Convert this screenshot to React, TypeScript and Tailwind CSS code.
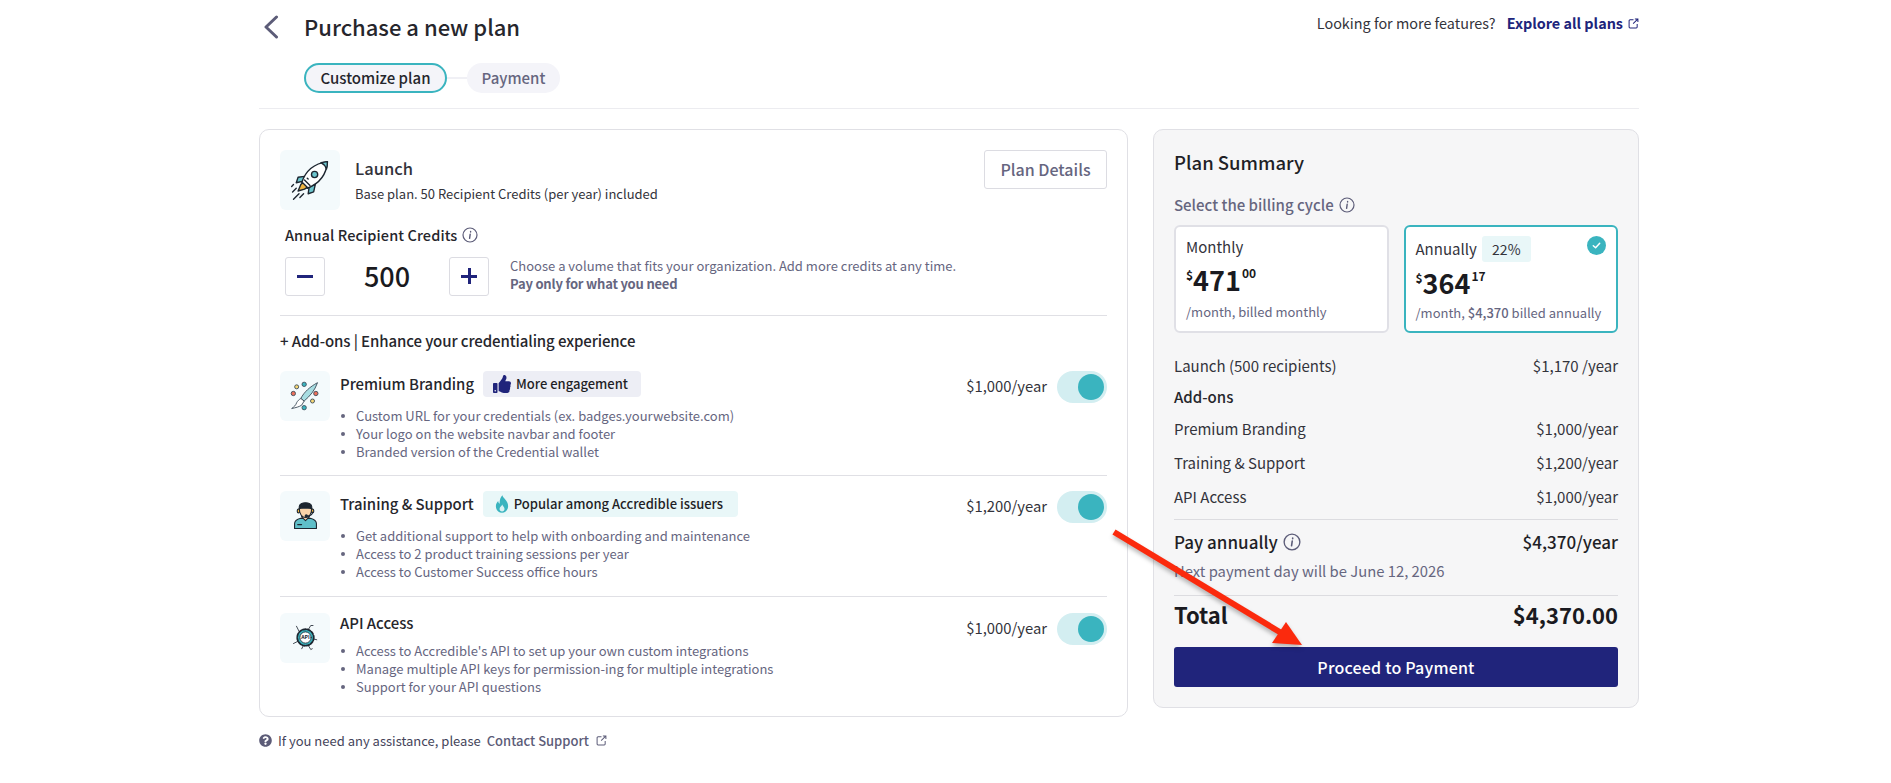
import { FaQuestionCircle, FaThumbsUp } from "react-icons/fa";

const sans = { fontFamily: '"Noto Sans CJK SC", "Noto Sans", sans-serif' };

function InfoIcon({ className }: { className?: string }) {
  return (
    <svg viewBox="0 0 16 16" fill="none" stroke="currentColor" className={className}>
      <circle cx="8" cy="8" r="7" strokeWidth="1.2" />
      <path d="M8.6 4.4v.6M8.2 7.2l-.6 4.2" strokeWidth="1.4" strokeLinecap="round" />
    </svg>
  );
}

function ExternalIcon({ className }: { className?: string }) {
  return (
    <svg viewBox="0 0 12 12" fill="none" stroke="currentColor" strokeWidth="1.1" className={className}>
      <path d="M6 2H2.2a1 1 0 0 0-1 1v6.8a1 1 0 0 0 1 1H9a1 1 0 0 0 1-1V6.5" />
      <path d="M7.5 1h3.3v3.3M10.6 1.2 5.6 6.2" />
    </svg>
  );
}

function Flame() {
  return (
    <svg viewBox="0 0 16 20" className="w-[14px] h-[18px]">
      <path d="M8.5 0c.6 3.6 6.5 6 6.5 12.2C15 16.5 11.9 20 8 20s-7-3.300-7-7.300c0-2.700 1.300-4.700 2.700-6 .1 1.500.6 2.600 1.700 3.100C5 6.200 6 2.500 8.500 0z" fill="#3ab4bf" />
      <path d="M8.300 10.500c-.3 1.600-3.100 2.700-3.100 5.100 0 1.700 1.300 2.900 2.900 2.900s2.800-1.200 2.800-2.900c0-1.800-1.900-3.200-2.600-5.100z" fill="#d9f1f3" />
    </svg>
  );
}

function Rocket() {
  return (
    <svg viewBox="0 0 48 48" className="w-[44px] h-[44px]" stroke="#1d2630" strokeWidth="1.5" strokeLinejoin="round" strokeLinecap="round">
      <path d="M18 20 11 21l-2 6 9-2z" fill="#6cc5cd" />
      <path d="M23 32l-1 7 6-2 2-9z" fill="#6cc5cd" />
      <path d="M15 27C19 14 29 6 43 4c-1 14-9 24-22 29z" fill="#fff" />
      <path d="M36 5c2 1 5 4 6 7 1-3 1-5 1-8z" fill="#6cc5cd" />
      <circle cx="29" cy="18" r="3.4" fill="#6cc5cd" />
      <path d="M14 29l-3 7 7-2 3-2-5-5z" fill="#f0b542" />
      <path d="M9 33l-4 4M12 39l-6 6M17 39l-4 4M6 29l-2 2M18 24l6 6M21 22l1 1" fill="none" />
    </svg>
  );
}

function Brush() {
  return (
    <svg viewBox="0 0 36 36" className="w-[30px] h-[30px]" stroke="#3e4f5c" strokeWidth="1.1" strokeLinejoin="round">
      <path d="M13 21C17 13 24 7 33 2c-3 9-9 16-16 22z" fill="#a7dde2" />
      <path d="M13 21l4 3-3 5c-3 2-7 3-12 4 3-2 5-4 6-7 1-2 3-4 5-5z" fill="#fff" />
      <circle cx="17" cy="4" r="2.6" fill="#3ab4bf" />
      <circle cx="8" cy="7" r="2.4" fill="#f7d774" />
      <circle cx="4" cy="15" r="2.6" fill="#ec6f5a" />
      <circle cx="31" cy="15" r="2.6" fill="#ec6f5a" />
      <circle cx="27" cy="24" r="2.4" fill="#f7d774" />
      <circle cx="17" cy="32" r="2.6" fill="#3ab4bf" />
    </svg>
  );
}

function Agent() {
  return (
    <svg viewBox="0 0 32 36" className="w-[25px] h-[30px]" stroke="#1d2630" strokeWidth="1.4" strokeLinejoin="round" strokeLinecap="round">
      <path d="M2 34v-6c0-4 4-6 8-7h12c4 1 8 3 8 7v6z" fill="#5fbfc9" />
      <path d="M11 19l5 5 5-5-1-3h-8z" fill="#f9d3a8" />
      <rect x="5.500" y="9" width="3" height="5" rx="1.500" fill="#f0b542" />
      <rect x="23.500" y="9" width="3" height="5" rx="1.500" fill="#f0b542" />
      <path d="M8 8c0 8 4 12 8 12s8-4 8-12z" fill="#f9d3a8" />
      <path d="M8 9V6c0-3 4-5 8-5s8 2 8 5v3l-2-1c-1-1-2-1-3-1h-6c-2 0-3 0-5 2z" fill="#1d2630" />
      <path d="M25 13c0 3-3 5-7 5" fill="none" />
      <circle cx="17" cy="18" r="1.400" fill="#1d2630" />
      <path d="M6 29h5" fill="none" />
    </svg>
  );
}

function ApiGear() {
  return (
    <svg viewBox="0 0 36 36" className="w-[27px] h-[27px]" stroke="#1d2630" strokeWidth="1.1" strokeLinecap="round">
      <path d="M6 3l3 6M28 2h-3l-3 5M2 26l6-3M33 21l-4-1M13 33l2-4M27 33l-2 1-3-5" fill="none" />
      <circle cx="18" cy="18" r="11" fill="#3ab4bf" strokeDasharray="4 2" strokeWidth="2.4" />
      <circle cx="18" cy="18" r="7.500" fill="#fff" />
      <text x="18" y="20.500" fontSize="7" fontWeight="700" textAnchor="middle" stroke="none" fill="#1d2630">API</text>
    </svg>
  );
}

function IconTile({ children }: { children: React.ReactNode }) {
  return <div className="w-[50px] h-[50px] shrink-0 rounded-[6px] bg-[#f4fafc] flex items-center justify-center">{children}</div>;
}

const addons = [
  {
    name: "Premium Branding",
    icon: <Brush />,
    price: "$1,000/year",
    badge: { label: "More engagement", cls: "bg-[#edeef5] w-[158px] pl-[10px]", icon: <FaThumbsUp className="w-[18px] h-[18px] text-[#20247b]" /> },
    bullets: ["Custom URL for your credentials (ex. badges.yourwebsite.com)", "Your logo on the website navbar and footer", "Branded version of the Credential wallet"],
    cls: "pb-[14px] border-b",
  },
  {
    name: "Training & Support",
    icon: <Agent />,
    price: "$1,200/year",
    badge: { label: "Popular among Accredible issuers", cls: "bg-[#e9f7f8] w-[255px] pl-[12px]", icon: <Flame /> },
    bullets: ["Get additional support to help with onboarding and maintenance", "Access to 2 product training sessions per year", "Access to Customer Success office hours"],
    cls: "pt-[15px] pb-[15px] border-b",
  },
  {
    name: "API Access",
    icon: <ApiGear />,
    price: "$1,000/year",
    bullets: ["Access to Accredible's API to set up your own custom integrations", "Manage multiple API keys for permission-ing for multiple integrations", "Support for your API questions"],
    cls: "pt-[16px]",
  },
];

const summaryRows = [
  ["Premium Branding", "$1,000/year"],
  ["Training & Support", "$1,200/year"],
  ["API Access", "$1,000/year"],
];

function AddonRow({ addon }: { addon: (typeof addons)[number] }) {
  return (
    <div className={`flex border-[#e0e0e5] ${addon.cls}`}>
      <IconTile>{addon.icon}</IconTile>
      <div className="ml-[10px] flex-1">
        <div className="flex items-center min-h-[19px]">
          <span className="text-[14.9px] leading-[19px] font-medium text-[#26262c]">{addon.name}</span>
          {addon.badge && (
            <span className={`ml-[9px] h-[26px] rounded-[4px] flex items-center gap-[5px] whitespace-nowrap text-[13px] font-medium text-[#1f1f26] ${addon.badge.cls}`}>
              {addon.badge.icon}
              {addon.badge.label}
            </span>
          )}
        </div>
        <ul className="mt-[10px] text-[13px] leading-[18px] text-[#66667f]">
          {addon.bullets.map((b) => (
            <li key={b} className="flex items-center">
              <span className="w-[4px] h-[4px] rounded-full bg-[#66667f] ml-[1px] mr-[11px]" />
              {b}
            </li>
          ))}
        </ul>
      </div>
      <div className="flex items-center self-start gap-[10px] h-[32px]">
        <span className="text-[14.8px] text-[#33333b]">{addon.price}</span>
        <div className="w-[50px] h-[32px] rounded-full bg-[#d3eef1] flex items-center justify-end pr-[3px]">
          <div className="w-[26px] h-[26px] rounded-full bg-[#3ab4bf]" />
        </div>
      </div>
    </div>
  );
}

function CycleCard({ label, dollars, cents, note, active }: { label: React.ReactNode; dollars: string; cents: string; note: React.ReactNode; active?: boolean }) {
  return (
    <div className={`relative flex-1 h-[108px] rounded-[6px] bg-white border-2 px-[10px] pt-[9px] ${active ? "border-[#3ab4bf]" : "border-[#e0e0e6]"}`}>
      <div className={`text-[15px] text-[#33333b] flex items-center ${active ? "h-[26px]" : "h-[22px]"}`}>{label}</div>
      <div className={`flex items-start text-[#1a1a20] font-bold ${active ? "mt-[6px]" : "mt-[7px]"}`}>
        <span className="text-[12px] leading-[14px] mt-[3px]">$</span>
        <span className="text-[27px] leading-[30px]">{dollars}</span>
        <span className="text-[12px] leading-[14px] mt-[1px] ml-[1px]">{cents}</span>
      </div>
      <div className={`whitespace-nowrap text-[13px] leading-[18px] text-[#66667f] ${active ? "mt-[6px]" : "mt-[8px]"}`}>{note}</div>
      {active && (
        <div className="absolute right-[10px] top-[9px] w-[19px] h-[19px] rounded-full bg-[#3ab4bf] flex items-center justify-center">
          <svg viewBox="0 0 12 12" fill="none" stroke="#fff" strokeWidth="1.6" strokeLinecap="round" strokeLinejoin="round" className="w-[11px] h-[11px]">
            <path d="M2.500 6.200 5 8.500l4.500-5" />
          </svg>
        </div>
      )}
    </div>
  );
}

export default function App() {
  return (
    <div className="relative w-[1891px] h-[783px] overflow-hidden bg-white" style={sans}>
      <div className="ml-[259px] w-[1380px]">
        {/* Header */}
        <div className="h-[109px] border-b border-[#ececf0] pt-[11px]">
          <div className="flex items-start justify-between h-[32px]">
            <div className="flex items-center h-[32px]">
              <svg viewBox="0 0 16 24" fill="none" stroke="#5c5c78" strokeWidth="3" strokeLinecap="round" strokeLinejoin="round" className="w-[16px] h-[24px] ml-[4px]">
                <path d="M13.500 2 3 12l10.500 10" />
              </svg>
              <h1 className="ml-[25px] mb-[2px] text-[22px] font-medium text-[#26262c]">Purchase a new plan</h1>
            </div>
            <div className="mt-[1px] flex items-center text-[14.4px] h-[22px]">
              <span className="text-[#33333b]">Looking for more features?</span>
              <span className="ml-[11px] font-semibold text-[#20247b]">Explore all plans</span>
              <ExternalIcon className="ml-[5px] w-[11px] h-[11px] text-[#20247b]" />
            </div>
          </div>
          <div className="mt-[20px] ml-[45px] flex items-center">
            <div className="w-[143px] h-[30px] rounded-full bg-[#f4f4f9] border-2 border-[#3ab4bf] flex items-center justify-center text-[15px] font-medium text-[#26262c]">Customize plan</div>
            <div className="w-[20px] h-[2px] bg-[#f0f0f5]" />
            <div className="w-[93px] h-[30px] rounded-full bg-[#f4f4f9] flex items-center justify-center text-[15px] font-medium text-[#66667f]">Payment</div>
          </div>
        </div>

        <div className="mt-[20px] flex items-start gap-[25px]">
          <div>
            {/* Left card */}
            <div className="w-[869px] h-[588px] rounded-[10px] border border-[#e0e0e5] p-[20px]">
              <div className="flex h-[60px]">
                <div className="w-[60px] h-[60px] rounded-[6px] bg-[#f4fafc] flex items-center justify-center">
                  <Rocket />
                </div>
                <div className="ml-[15px] flex-1 pt-[6px]">
                  <div className="text-[16.5px] leading-[24px] font-medium text-[#33333b]">Launch</div>
                  <div className="mt-[5px] text-[13px] leading-[18px] text-[#33333b]">Base plan. 50 Recipient Credits (per year) included</div>
                </div>
                <button className="w-[123px] h-[39px] rounded-[3px] border border-[#dcdce2] pb-[2px] text-[16px] font-medium text-[#66667f]">Plan Details</button>
              </div>

              <div className="mt-[16px] ml-[5px] flex items-center h-[18px] gap-[5px] text-[14.5px] font-medium text-[#26262c] tracking-[0.1px]">
                Annual Recipient Credits
                <InfoIcon className="w-[16px] h-[16px] text-[#5c5c78]" />
              </div>
              <div className="mt-[12px] ml-[5px] flex items-center">
                <button className="w-[40px] h-[39px] rounded-[3px] border border-[#dcdce2] flex items-center justify-center">
                  <span className="w-[16px] h-[3px] bg-[#20247b]" />
                </button>
                <div className="w-[124px] text-center text-[27px] font-medium text-[#1a1a20]">500</div>
                <button className="relative w-[40px] h-[39px] rounded-[3px] border border-[#dcdce2] flex items-center justify-center">
                  <span className="w-[16px] h-[3px] bg-[#20247b]" />
                  <span className="absolute w-[3px] h-[16px] bg-[#20247b]" />
                </button>
                <div className="ml-[21px] pb-[2px] text-[13px] leading-[18px] text-[#66667f]">
                  <div>Choose a volume that fits your organization. Add more credits at any time.</div>
                  <div className="font-semibold tracking-[-0.2px]">Pay only for what you need</div>
                </div>
              </div>

              <div className="mt-[18px] border-t border-[#e0e0e5]" />
              <div className="mt-[16px] h-[20px] mb-[19px] flex items-center text-[15px] font-medium text-[#26262c] tracking-[-0.1px]">+ Add-ons | Enhance your credentialing experience</div>

              {addons.map((addon) => (
                <AddonRow key={addon.name} addon={addon} />
              ))}
            </div>

            <div className="mt-[14px] flex items-center text-[13px] text-[#44445a]">
              <FaQuestionCircle className="w-[13px] h-[13px] text-[#5c5c78]" />
              <span className="ml-[6px]">If you need any assistance, please</span>
              <span className="ml-[6px] font-medium text-[#5c5c78]">Contact Support</span>
              <ExternalIcon className="ml-[7px] w-[11px] h-[11px] text-[#5c5c78]" />
            </div>
          </div>

          {/* Plan summary */}
          <div className="w-[486px] h-[579px] rounded-[10px] border border-[#e0e0e5] bg-[#f6f6f7] px-[20px] pt-[19px]">
            <div className="text-[18.5px] leading-[26px] font-medium text-[#1f1f26]">Plan Summary</div>
            <div className="mt-[19px] h-[22px] flex items-center gap-[5px] text-[15px] font-medium text-[#66667f]">
              Select the billing cycle
              <InfoIcon className="w-[16px] h-[16px] text-[#5c5c78]" />
            </div>
            <div className="mt-[9px] flex gap-[15px]">
              <CycleCard label="Monthly" dollars="471" cents="00" note="/month, billed monthly" />
              <CycleCard
                active
                label={
                  <>
                    Annually
                    <span className="ml-[5px] w-[49px] h-[26px] rounded-[3px] bg-[#e9f7f8] flex items-center justify-center text-[14px]">22%</span>
                  </>
                }
                dollars="364"
                cents="17"
                note={
                  <>
                    /month, <span className="font-medium">$4,370</span> billed annually
                  </>
                }
              />
            </div>

            <div className="mt-[22px] flex justify-between text-[15px] leading-[22px] text-[#33333b]">
              <span>Launch (500 recipients)</span>
              <span>$1,170 /year</span>
            </div>
            <div className="mt-[9px] text-[15px] leading-[22px] font-medium text-[#26262c]">Add-ons</div>
            <div className="mt-[10px] flex flex-col gap-[12px] text-[15px] leading-[22px] text-[#33333b]">
              {summaryRows.map(([name, price]) => (
                <div key={name} className="flex justify-between">
                  <span>{name}</span>
                  <span>{price}</span>
                </div>
              ))}
            </div>
            <div className="mt-[11px] border-t border-[#dcdce0]" />
            <div className="mt-[10px] flex justify-between items-center h-[24px] text-[17px] font-medium text-[#1f1f26]">
              <span className="flex items-center gap-[5px]">
                Pay annually
                <InfoIcon className="w-[18px] h-[18px] text-[#5c5c78]" />
              </span>
              <span>$4,370/year</span>
            </div>
            <div className="mt-[6px] text-[14.8px] leading-[22px] text-[#66667f]">Next payment day will be June 12, 2026</div>
            <div className="mt-[13px] border-t border-[#dcdce0]" />
            <div className="mt-[1px] flex justify-between items-center h-[34px] text-[22px] font-bold text-[#1a1a20]">
              <span>Total</span>
              <span>$4,370.00</span>
            </div>
            <button className="mt-[16px] w-full h-[40px] rounded-[3px] bg-[#20247b] text-white text-[16px] font-medium tracking-[0.2px]">Proceed to Payment</button>
          </div>
        </div>
      </div>

      {/* Red annotation arrow drawn over the page */}
      <svg viewBox="0 0 1891 783" className="absolute inset-0 w-[1891px] h-[783px] pointer-events-none drop-shadow-[0_3px_2px_rgba(0,0,0,0.28)]">
        <path d="M1114 532 1283 634" stroke="#fb2a0d" strokeWidth="6" />
        <path d="M1286 622 1272 643 1302 645z" fill="#fb2a0d" />
      </svg>
    </div>
  );
}
